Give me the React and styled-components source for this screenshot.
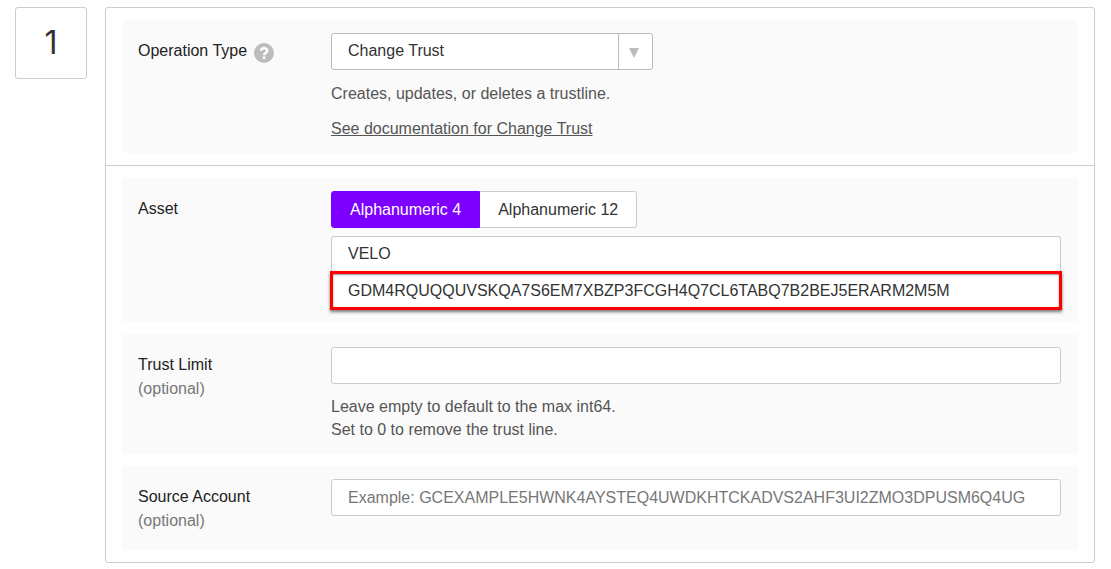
import React from "react";
import styled, { createGlobalStyle, css } from "styled-components";

const GlobalStyle = createGlobalStyle`
  *, *::before, *::after { box-sizing: border-box; }
  body {
    margin: 0;
    background: #fff;
    color: #333;
    font: 400 16px/24px "Liberation Sans", Arial, sans-serif;
  }
  input, select, button { font: inherit; color: inherit; }
`;

const Page = styled.main`
  display: flex;
  align-items: flex-start;
  gap: 18px;
  padding: 7px 16px 6px 15px;
`;

const StepNumber = styled.div`
  flex: none;
  display: grid;
  place-items: center;
  width: 72px;
  height: 72px;
  border: 1px solid #ccc;
  border-radius: 3px;
  font: 400 32px/40px Inter, sans-serif;
`;

const Card = styled.form`
  flex: 1;
  min-width: 0;
  border: 1px solid #ccc;
  border-radius: 3px;
`;

const Section = styled.section`
  display: flex;
  flex-direction: column;
  gap: 12px;
  padding: 12px 16px;
  & + & { border-top: 1px solid #ccc; }
`;

const Row = styled.div`
  display: flex;
  padding: 13px 17px 13px 16px;
  border-radius: 3px;
  background: #fafafa;
`;

const LabelColumn = styled.div`
  flex: none;
  width: 193px;
  padding: 6px 0 4px;
  color: #222;
`;

const Optional = styled.span`
  display: block;
  color: #777;
`;

const HelpButton = styled.button`
  width: 20px;
  height: 20px;
  margin-left: 2px;
  padding: 0;
  border: 0;
  background: none;
  vertical-align: -7px;
  svg { display: block; }
`;

const Controls = styled.div`
  flex: 1;
  min-width: 0;
`;

const SelectBox = styled.div`
  position: relative;
  width: 322px;
`;

const Select = styled.select`
  display: block;
  width: 100%;
  height: 37px;
  padding: 0 48px 2px 16px;
  border: 1px solid #bbb;
  border-radius: 3px;
  background: #fff;
  appearance: none;
`;

const SelectArrow = styled.span`
  position: absolute;
  inset: 0 0 0 auto;
  display: grid;
  place-items: center;
  width: 35px;
  border-left: 1px solid #bbb;
  padding: 2px 4px 0 0;
  pointer-events: none;
`;

const Note = styled.p`
  margin: ${({ $tight }) => ($tight ? "11px" : "12px")} 0 0;
  color: #555;
  line-height: 23px;
`;

const DocLink = styled.a`
  color: inherit;
  text-decoration: underline;
`;

const ButtonGroup = styled.div`
  display: flex;
  margin-bottom: 8px;
`;

const OptionButton = styled.button`
  height: 37px;
  padding: 0 18px;
  border: 1px solid #ccc;
  border-left: 0;
  border-radius: 0 3px 3px 0;
  background: #fff;
  ${({ $active }) => $active && css`
    border: 1px solid #7d00ff;
    border-radius: 3px 0 0 3px;
    background: #7d00ff;
    color: #fff;
  `}
`;

const TextInput = styled.input`
  display: block;
  width: 100%;
  height: 37px;
  padding: 0 16px;
  border: 1px solid #ccc;
  border-radius: 3px;
  background: #fff;
  outline: 0;
  &::placeholder { color: #777; opacity: 1; }
`;

const StackedInput = styled(TextInput)`
  height: 36px;
  padding-bottom: 2px;
  border-bottom: 0;
  border-radius: 3px 3px 0 0;
`;

const HighlightedInput = styled(TextInput)`
  padding: 0 15px;
  border: 2px solid #f00;
  border-radius: 0;
  outline: 1px solid #f00;
  box-shadow: 0 2px 3px 1px #777, inset 0 1px 2px #999;
`;

export default function App() {
  return (
    <>
      <GlobalStyle />
      <Page>
        <StepNumber>1</StepNumber>
        <Card>
          <Section>
            <Row>
              <LabelColumn>
                <label htmlFor="operation">Operation Type</label>{" "}
                <HelpButton type="button" aria-label="Help">
                  <svg width="20" height="20" viewBox="0 0 20 20" fill="none">
                    <circle cx="10" cy="10" r="10" fill="#bdbdbd" />
                    <path d="M7 7.8C7 6 8.2 5.2 10 5.2s3.2 1 3.2 2.6c0 2.3-3.1 2.1-3.1 4.4" stroke="#fff" strokeWidth="2.5" />
                    <path d="M8.8 13.4h2.6V16H8.8z" fill="#fff" />
                  </svg>
                </HelpButton>
              </LabelColumn>
              <Controls>
                <SelectBox>
                  <Select id="operation" defaultValue="change">
                    <option value="change">Change Trust</option>
                  </Select>
                  <SelectArrow aria-hidden="true">
                    <svg width="10" height="10" viewBox="0 0 10 10">
                      <path d="M0 0h10L5 10z" fill="#bbb" />
                    </svg>
                  </SelectArrow>
                </SelectBox>
                <Note>Creates, updates, or deletes a trustline.</Note>
                <Note>
                  <DocLink href="#change-trust">See documentation for Change Trust</DocLink>
                </Note>
              </Controls>
            </Row>
          </Section>
          <Section>
            <Row>
              <LabelColumn>
                <label htmlFor="asset">Asset</label>
              </LabelColumn>
              <Controls>
                <ButtonGroup>
                  <OptionButton type="button" $active aria-pressed="true">Alphanumeric 4</OptionButton>
                  <OptionButton type="button" aria-pressed="false">Alphanumeric 12</OptionButton>
                </ButtonGroup>
                <StackedInput id="asset" defaultValue="VELO" />
                <HighlightedInput
                  aria-label="Asset issuer"
                  defaultValue="GDM4RQUQQUVSKQA7S6EM7XBZP3FCGH4Q7CL6TABQ7B2BEJ5ERARM2M5M"
                />
              </Controls>
            </Row>
            <Row>
              <LabelColumn>
                <label htmlFor="limit">Trust Limit <Optional>(optional)</Optional></label>
              </LabelColumn>
              <Controls>
                <TextInput id="limit" />
                <Note $tight>
                  Leave empty to default to the max int64.
                  <br />
                  Set to 0 to remove the trust line.
                </Note>
              </Controls>
            </Row>
            <Row>
              <LabelColumn>
                <label htmlFor="source">Source Account <Optional>(optional)</Optional></label>
              </LabelColumn>
              <Controls>
                <TextInput
                  id="source"
                  placeholder="Example: GCEXAMPLE5HWNK4AYSTEQ4UWDKHTCKADVS2AHF3UI2ZMO3DPUSM6Q4UG"
                />
              </Controls>
            </Row>
          </Section>
        </Card>
      </Page>
    </>
  );
}
